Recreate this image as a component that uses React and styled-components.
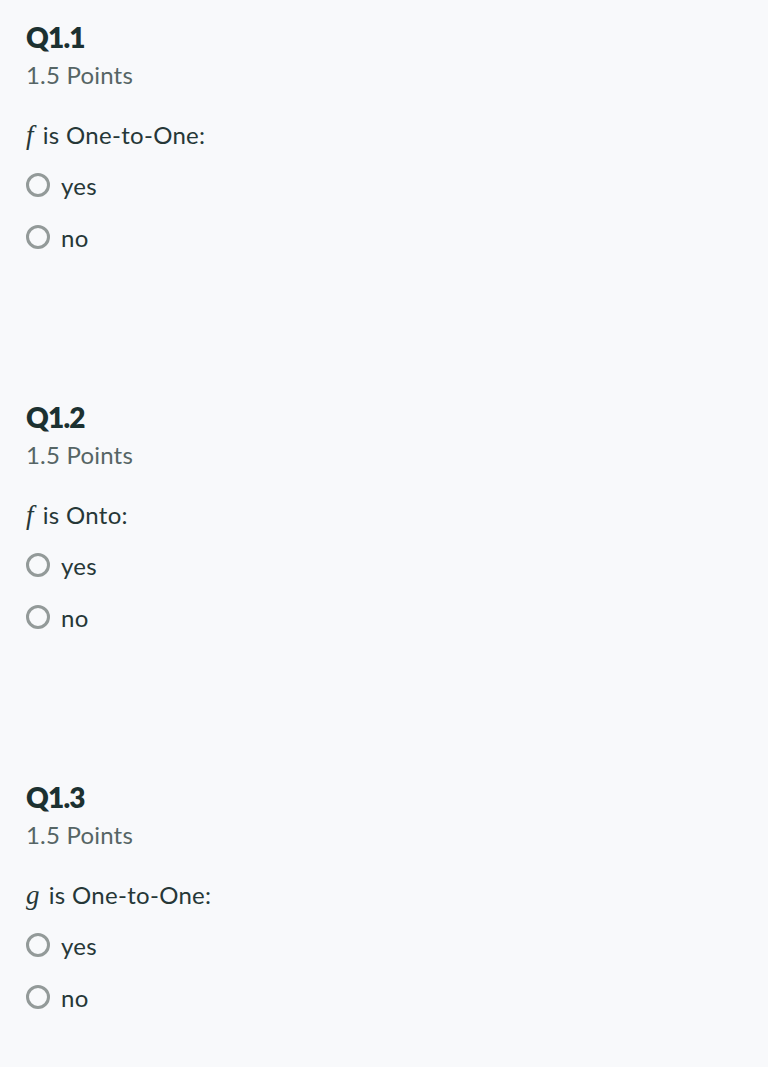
import React from "react";
import styled, { createGlobalStyle } from "styled-components";

const Global = createGlobalStyle`
  html, body {
    margin: 0;
    padding: 0;
    background: #f8f9fb;
  }
  body {
    font-family: Lato, "Open Sans", sans-serif;
    color: #2b3b3b;
  }
`;

const Page = styled.div`
  padding: 20px 26px 0 26px;
`;

const Question = styled.section`
  & + & {
    margin-top: 148px;
  }
`;

const Title = styled.h2`
  margin: 0;
  font-size: 28px;
  line-height: 34px;
  font-weight: 800;
  letter-spacing: -0.8px;
  color: #1c3131;
`;

const Points = styled.div`
  margin-top: 6px;
  font-size: 24px;
  line-height: 30px;
  letter-spacing: 0.2px;
  color: #566565;
`;

const Prompt = styled.p`
  margin: 30px 0 0 0;
  font-size: 24px;
  line-height: 30px;
  letter-spacing: 0.3px;
  color: #263737;
`;

const MathVar = styled.span`
  font-family: "Liberation Serif", "DejaVu Serif", serif;
  font-style: italic;
  font-size: 27px;
  margin-right: 9px;
`;

const Options = styled.div`
  display: flex;
  flex-direction: column;
  gap: 22px;
  margin-top: 20px;
`;

const Option = styled.label`
  display: flex;
  align-items: center;
  gap: 11px;
  height: 30px;
  font-size: 24px;
  letter-spacing: 0.3px;
  color: #263737;
`;

const Radio = styled.span`
  box-sizing: border-box;
  width: 24px;
  height: 24px;
  border-radius: 50%;
  border: 3.5px solid #939a99;
  flex: none;
`;

const questions = [
  { id: "Q1.1", v: "f", text: "is One-to-One:" },
  { id: "Q1.2", v: "f", text: "is Onto:" },
  { id: "Q1.3", v: "g", text: "is One-to-One:" },
];

export default function App() {
  return (
    <>
      <Global />
      <Page>
        {questions.map(q => (
          <Question key={q.id}>
            <Title>{q.id}</Title>
            <Points>1.5 Points</Points>
            <Prompt>
              <MathVar>{q.v}</MathVar>{q.text}
            </Prompt>
            <Options>
              <Option><Radio />yes</Option>
              <Option><Radio />no</Option>
            </Options>
          </Question>
        ))}
      </Page>
    </>
  );
}
